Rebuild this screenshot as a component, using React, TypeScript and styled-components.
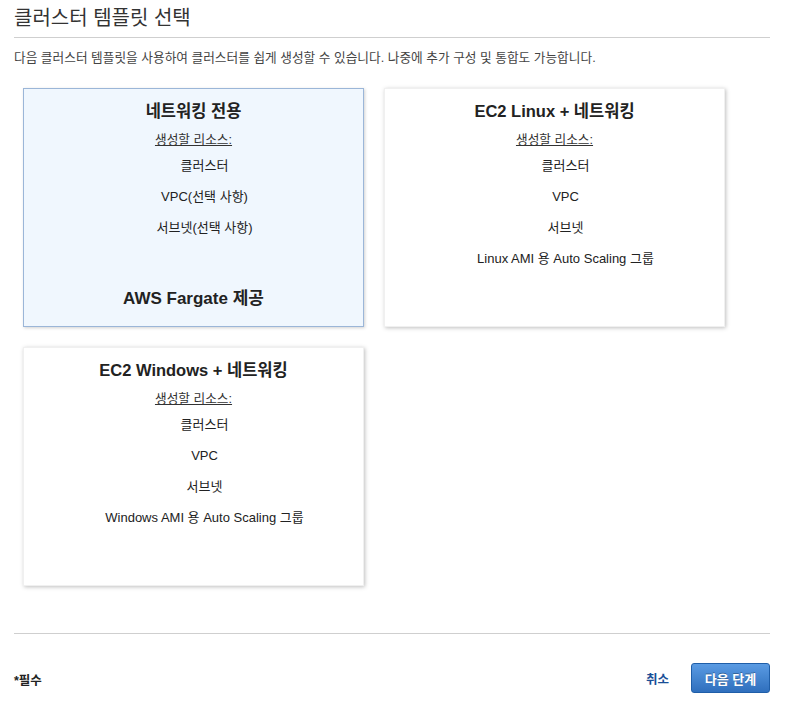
import styled, { createGlobalStyle } from "styled-components";

const GlobalStyle = createGlobalStyle`
  body {
    margin: 0;
    background: #ffffff;
    font-family: "Liberation Sans", "Noto Sans CJK KR", Arial, sans-serif;
    color: #222;
  }
`;

const Page = styled.div`
  width: 756px;
  padding: 0 30px 0 14px;
  height: 705px;
  display: flex;
  flex-direction: column;
`;

const Heading = styled.h1`
  margin: 0;
  padding-top: 5px;
  font-size: 20px;
  line-height: 26px;
  font-weight: 400;
  color: #333;
  padding-bottom: 6px;
  border-bottom: 1px solid #cfcfcf;
`;

const Description = styled.p`
  margin: 12px 0 0;
  font-size: 12.7px;
  line-height: 16px;
  color: #444;
`;

const CardGrid = styled.div`
  display: grid;
  grid-template-columns: 341px 341px;
  gap: 20px;
  padding-left: 9px;
  margin-top: 22px;
`;

const Card = styled.div<{ $selected?: boolean }>`
  box-sizing: border-box;
  height: 239px;
  display: flex;
  flex-direction: column;
  align-items: center;
  padding: 12px 0 17px;
  text-align: center;
  background: ${(p) => (p.$selected ? "#f0f7fe" : "#ffffff")};
  border: 1px solid ${(p) => (p.$selected ? "#9bb6d8" : "#f0f0f0")};
  box-shadow: ${(p) =>
    p.$selected ? "1px 1px 3px rgba(0,0,0,0.18)" : "1px 1px 4px rgba(0,0,0,0.25)"};
  cursor: pointer;
`;

const CardTitle = styled.div`
  font-size: 16.5px;
  line-height: 20px;
  font-weight: 700;
  color: #222;
`;

const ResourceLabel = styled.div`
  margin-top: 11px;
  font-size: 12.7px;
  line-height: 16px;
  color: #333;
  text-decoration: underline;
`;

const ResourceList = styled.ul`
  list-style: none;
  margin: 10px 0 0;
  padding: 0 0 0 22px;
  display: flex;
  flex-direction: column;
  gap: 15px;
`;

const ResourceItem = styled.li`
  font-size: 13px;
  line-height: 16px;
  color: #222;
`;

const Badge = styled.div`
  margin-top: auto;
  font-size: 17px;
  line-height: 20px;
  font-weight: 700;
  color: #222;
`;

const Footer = styled.div`
  margin-top: 47px;
  border-top: 1px solid #cfcfcf;
  padding-top: 29px;
  display: flex;
  align-items: center;
`;

const Required = styled.span`
  font-size: 12.5px;
  font-weight: 700;
  color: #222;
  margin-top: 2px;
`;

const Actions = styled.div`
  margin-left: auto;
  display: flex;
  align-items: center;
  gap: 22px;
`;

const CancelLink = styled.a`
  font-size: 12.5px;
  font-weight: 700;
  color: #1a4f97;
  text-decoration: none;
  cursor: pointer;
`;

const PrimaryButton = styled.button`
  width: 79px;
  height: 30px;
  border: 1px solid #1f5ea8;
  border-radius: 3px;
  background: linear-gradient(#5a9be3, #2f6fbd);
  color: #fff;
  font-family: inherit;
  font-size: 13px;
  font-weight: 700;
  text-shadow: 0 -1px 0 rgba(0, 0, 0, 0.3);
  cursor: pointer;
`;

interface Template {
  title: string;
  resources: string[];
  badge?: string;
  selected?: boolean;
}

const templates: Template[] = [
  {
    title: "네트워킹 전용",
    resources: ["클러스터", "VPC(선택 사항)", "서브넷(선택 사항)"],
    badge: "AWS Fargate 제공",
    selected: true,
  },
  {
    title: "EC2 Linux + 네트워킹",
    resources: ["클러스터", "VPC", "서브넷", "Linux AMI 용 Auto Scaling 그룹"],
  },
  {
    title: "EC2 Windows + 네트워킹",
    resources: ["클러스터", "VPC", "서브넷", "Windows AMI 용 Auto Scaling 그룹"],
  },
];

export default function App(): JSX.Element {
  return (
    <>
      <GlobalStyle />
      <Page>
        <Heading>클러스터 템플릿 선택</Heading>
        <Description>
          다음 클러스터 템플릿을 사용하여 클러스터를 쉽게 생성할 수 있습니다. 나중에 추가 구성 및 통합도 가능합니다.
        </Description>
        <CardGrid>
          {templates.map((t) => (
            <Card key={t.title} $selected={t.selected}>
              <CardTitle>{t.title}</CardTitle>
              <ResourceLabel>생성할 리소스:</ResourceLabel>
              <ResourceList>
                {t.resources.map((r) => (
                  <ResourceItem key={r}>{r}</ResourceItem>
                ))}
              </ResourceList>
              {t.badge && <Badge>{t.badge}</Badge>}
            </Card>
          ))}
        </CardGrid>
        <Footer>
          <Required>*필수</Required>
          <Actions>
            <CancelLink>취소</CancelLink>
            <PrimaryButton>다음 단계</PrimaryButton>
          </Actions>
        </Footer>
      </Page>
    </>
  );
}
